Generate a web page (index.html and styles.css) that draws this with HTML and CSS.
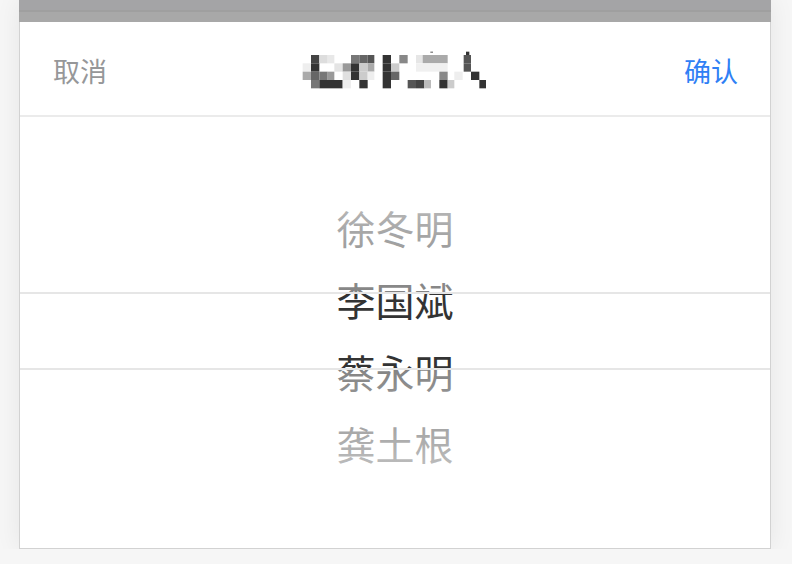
FILE: index.html
```html
<!DOCTYPE html>
<html>
<head>
    <meta charset="UTF-8">
    <meta name="viewport" content="width=device-width, initial-scale=1.0">
    <title>选择人员</title>
    <link rel="stylesheet" href="styles.css">
</head>
<body>
<div class="popup">
    <div class="top-strip"></div>

    <div class="toolbar">
        <span class="toolbar-btn cancel">取消</span>
        <div class="toolbar-title">
            <!-- blurred title, kept as mosaic -->
            <svg width="230" height="70" viewBox="0 0 690 210">
                <rect x="90" y="45" width="25" height="25" fill="#444"/>
                <rect x="115" y="45" width="25" height="25" fill="#ddd"/>
                <rect x="140" y="45" width="20" height="25" fill="#e8e8e8"/>
                <rect x="210" y="45" width="25" height="25" fill="#777"/>
                <rect x="235" y="45" width="25" height="25" fill="#666"/>
                <rect x="260" y="45" width="20" height="25" fill="#555"/>
                <rect x="305" y="45" width="25" height="25" fill="#333"/>
                <rect x="355" y="45" width="25" height="25" fill="#888"/>
                <rect x="405" y="45" width="20" height="25" fill="#e6e6e6"/>
                <rect x="425" y="45" width="75" height="25" fill="#aaa"/>
                <rect x="448" y="35" width="8" height="3" fill="#555"/>
                <rect x="555" y="35" width="10" height="10" fill="#333"/>
                <rect x="548" y="45" width="22" height="25" fill="#555"/>

                <rect x="65" y="70" width="25" height="25" fill="#eee"/>
                <rect x="90" y="70" width="25" height="25" fill="#333"/>
                <rect x="160" y="70" width="25" height="25" fill="#e4e4e4"/>
                <rect x="185" y="70" width="25" height="25" fill="#999"/>
                <rect x="210" y="70" width="25" height="25" fill="#333"/>
                <rect x="235" y="70" width="25" height="25" fill="#ccc"/>
                <rect x="260" y="70" width="20" height="25" fill="#aaa"/>
                <rect x="305" y="70" width="25" height="25" fill="#333"/>
                <rect x="330" y="70" width="25" height="25" fill="#ccc"/>
                <rect x="405" y="70" width="95" height="25" fill="#f0f0f0"/>
                <rect x="548" y="70" width="22" height="25" fill="#555"/>

                <rect x="65" y="95" width="25" height="25" fill="#aaa"/>
                <rect x="90" y="95" width="25" height="25" fill="#666"/>
                <rect x="115" y="95" width="25" height="25" fill="#777"/>
                <rect x="140" y="95" width="20" height="25" fill="#999"/>
                <rect x="185" y="95" width="25" height="25" fill="#e0e0e0"/>
                <rect x="210" y="95" width="25" height="25" fill="#333"/>
                <rect x="235" y="95" width="25" height="25" fill="#ccc"/>
                <rect x="260" y="95" width="20" height="25" fill="#eee"/>
                <rect x="305" y="95" width="25" height="25" fill="#333"/>
                <rect x="330" y="95" width="25" height="25" fill="#666"/>
                <rect x="475" y="95" width="25" height="25" fill="#888"/>
                <rect x="520" y="95" width="25" height="25" fill="#eee"/>
                <rect x="570" y="95" width="25" height="25" fill="#333"/>

                <rect x="90" y="120" width="25" height="25" fill="#777"/>
                <rect x="115" y="120" width="70" height="25" fill="#333"/>
                <rect x="185" y="120" width="25" height="25" fill="#eee"/>
                <rect x="235" y="120" width="25" height="25" fill="#333"/>
                <rect x="305" y="120" width="25" height="25" fill="#333"/>
                <rect x="380" y="120" width="25" height="25" fill="#555"/>
                <rect x="405" y="120" width="25" height="25" fill="#444"/>
                <rect x="430" y="120" width="20" height="25" fill="#bbb"/>
                <rect x="475" y="120" width="25" height="25" fill="#333"/>
                <rect x="500" y="120" width="20" height="25" fill="#ccc"/>
                <rect x="595" y="120" width="20" height="25" fill="#333"/>
            </svg>
        </div>
        <span class="toolbar-btn confirm">确认</span>
    </div>

    <div class="picker">
        <ul class="picker-column">
            <li class="picker-item">徐冬明</li>
            <li class="picker-item">李国斌</li>
            <li class="picker-item">蔡永明</li>
            <li class="picker-item">龚土根</li>
        </ul>
        <div class="picker-mask top"></div>
        <div class="picker-mask bottom"></div>
        <div class="picker-frame"></div>
    </div>
</div>
</body>
</html>
```

FILE: styles.css
```css
body {
    margin: 0;
    background: #f6f6f6;
    font-family: "Noto Sans CJK SC", "Noto Sans", sans-serif;
}

.popup {
    width: 752px;
    height: 549px;
    margin-left: 19px;
    box-sizing: border-box;
    background: #fff;
    border: 1px solid #d2d2d2;
    border-top: none;
    box-shadow: 0 0 24px rgba(0, 0, 0, 0.07);
    display: flex;
    flex-direction: column;
}

.top-strip {
    height: 22px;
    background: linear-gradient(#a4a4a6 0, #a4a4a6 10px, #9f9f9f 10px, #9f9f9f 12px, #a8a8a8 12px);
    margin: 0 -1px;
}

.toolbar {
    height: 89px;
    border-bottom: 2px solid #ebebeb;
    display: flex;
    align-items: center;
    justify-content: space-between;
    padding: 4px 32px 0 33px;
}

.toolbar-btn {
    font-size: 27px;
    line-height: 1;
}

.cancel {
    color: #969799;
}

.confirm {
    color: #2f80f5;
}

.toolbar-title {
    display: flex;
    align-self: flex-start;
    margin-top: 14px;
}

.toolbar-title svg {
    display: block;
}

.picker {
    position: relative;
    flex: 1;
    overflow: hidden;
}

.picker-column {
    list-style: none;
    margin: 0;
    padding: 74px 0 0 0;
}

.picker-item {
    height: 72px;
    line-height: 72px;
    text-align: center;
    font-size: 39px;
    color: #333;
}

.picker-mask {
    position: absolute;
    left: 0;
    right: 0;
}

.picker-mask.top {
    top: 0;
    height: 175px;
    background: linear-gradient(180deg, rgba(255, 255, 255, 0.9), rgba(255, 255, 255, 0.4));
}

.picker-mask.bottom {
    top: 253px;
    bottom: 0;
    background: linear-gradient(0deg, rgba(255, 255, 255, 0.9), rgba(255, 255, 255, 0.4));
}

.picker-frame {
    position: absolute;
    left: 0;
    right: 0;
    top: 175px;
    height: 74px;
    border-top: 2px solid #e6e6e6;
    border-bottom: 2px solid #e6e6e6;
}
```
